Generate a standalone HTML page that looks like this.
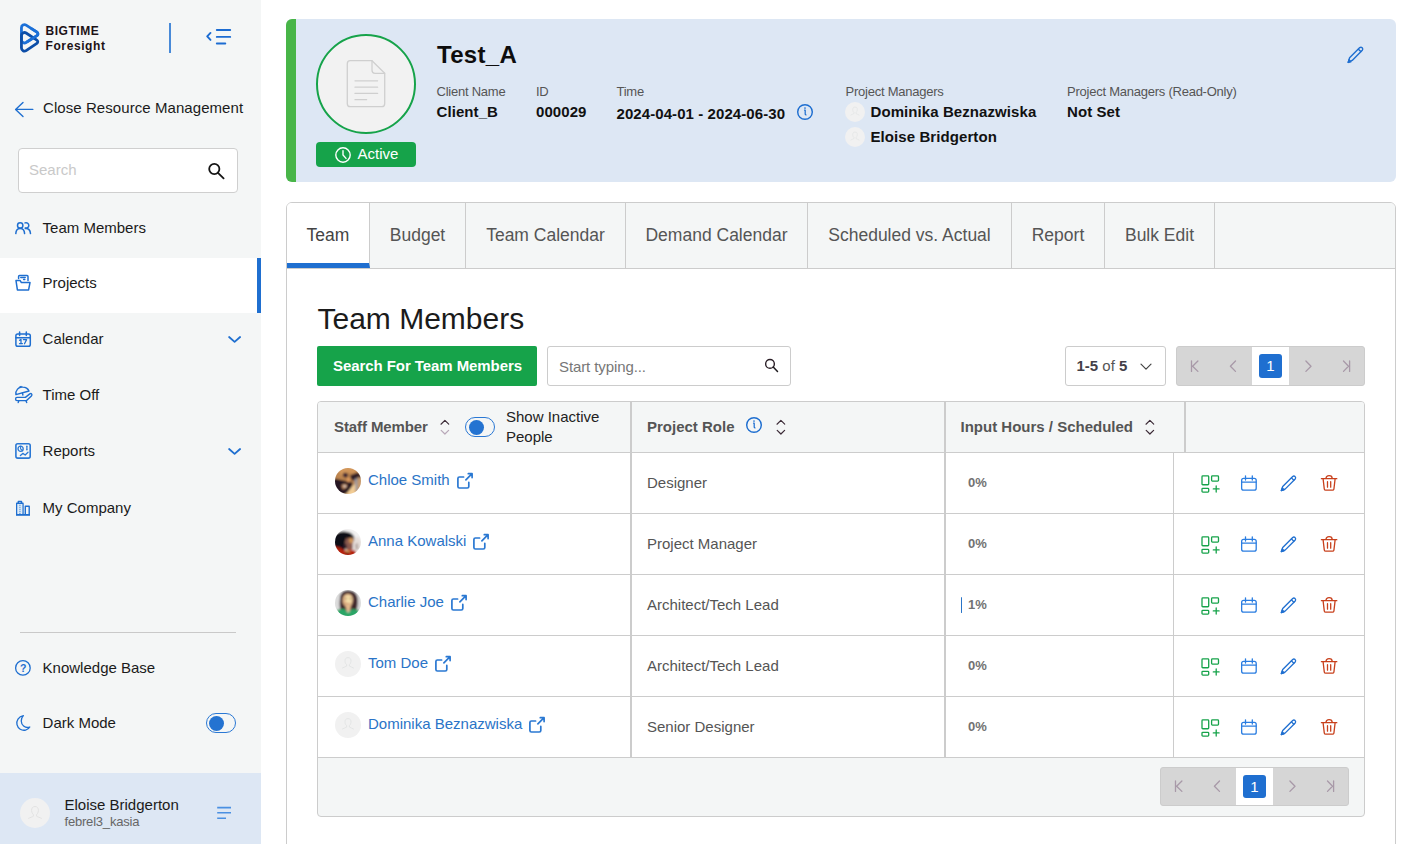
<!DOCTYPE html>
<html lang="en">
<head>
<meta charset="utf-8">
<title>Test_A - Team</title>
<style>
*{box-sizing:border-box;margin:0;padding:0}
html,body{width:1412px;height:844px;overflow:hidden;background:#fff}
body{font-family:"Liberation Sans",sans-serif;color:#1b1b1b;position:relative;font-size:15px}
.abs{position:absolute}
svg{display:block;overflow:visible}
/* sidebar */
#side{position:absolute;left:0;top:0;width:261px;height:844px;background:#f4f6f6}
.mi{position:absolute;left:0;width:261px;height:56px}
.mi .ic{position:absolute;left:15px;top:19px;width:18px;height:18px}
.mi .tx{position:absolute;left:42.600px;top:-.4px;line-height:56px;font-size:15px;color:#1b1b1b;white-space:nowrap}
.mi .chev{position:absolute;left:228px;top:24px}
.mi.act{background:#fff}
.mi.act:after{content:"";position:absolute;right:0;top:0;width:4px;height:100%;background:#1f6fd0}
/* banner */
#ban{position:absolute;left:286px;top:19px;width:1110px;height:163px;background:#dde7f4;border-radius:6px;overflow:hidden}
#ban:before{content:"";position:absolute;left:0;top:0;width:10px;height:100%;background:#48b548}
.lbl{position:absolute;font-size:13px;color:#555;white-space:nowrap;line-height:16px;letter-spacing:-.24px}
.val{position:absolute;font-size:15px;font-weight:bold;color:#111;white-space:nowrap;line-height:18px;letter-spacing:.08px}
.pav{position:absolute;width:20px;height:20px;border-radius:50%;background:#efefef}
.hd{font-size:15px;font-weight:bold;color:#555;line-height:20px;white-space:nowrap}
.ext{position:absolute;left:100%;margin-left:5.800px;top:1px}
/* tabs */
#tabs{position:absolute;left:286px;top:202px;width:1110px;height:700px;border:1px solid #ccc;border-radius:6px 6px 0 0;background:#fff;overflow:hidden}
#tabbar{position:absolute;left:0;top:0;width:100%;height:66px;background:#f4f6f6;border-bottom:1px solid #ccc}
.tab{position:absolute;top:0;height:65px;line-height:65px;font-size:17.5px;color:#555;text-align:center;border-right:1px solid #ccc;white-space:nowrap}
.tab.on{background:#fff;border-bottom:5px solid #1f6fd0;height:65px;color:#444}
/* table */
#tbl{position:absolute;left:317px;top:401px;width:1048px;height:416px;border:1px solid #ccc;border-radius:4px;background:#f4f6f6;overflow:hidden}
.row{position:absolute;left:0;width:1046px;height:61px;background:#fff;border-top:1px solid #ccc}
.row .nm{position:absolute;left:50px;top:18px;font-size:15px;color:#2a74c7;white-space:nowrap;line-height:18px}
.row .role{position:absolute;left:329px;top:21px;font-size:15px;color:#555;white-space:nowrap;line-height:18px}
.row .pct{position:absolute;left:650px;top:21.9px;font-size:13px;font-weight:bold;color:#727272;line-height:16px}
.vl{position:absolute;top:0;width:2px;background:#ccc}
.av{position:absolute;left:17px;top:15px;width:26px;height:26px}
.pager{position:absolute;width:189px;height:39px;background:#d6d6d6;border:1px solid #ccc;border-radius:3px}
.pager .cur{position:absolute;left:75px;top:0;width:37px;height:37px;background:#fff}
.pager .cur i{position:absolute;left:7px;top:7px;width:23px;height:23px;background:#1f6fd0;border-radius:3px;color:#fff;font-style:normal;font-size:15px;line-height:23px;text-align:center}
.p40 .cur{height:38px}
.p40 .cur i{height:24px;line-height:24px}
</style>
</head>
<body>
<div id="side">
 <!-- logo -->
 <svg class="abs" style="left:0;top:0" width="261" height="70" viewBox="0 0 261 70" fill="none">
  <path d="M21.45 27.63A3 3 0 0 1 26.09 25.11L36.99 32.20A2 2 0 0 1 36.97 35.57L26.06 42.48A3 3 0 0 1 21.45 39.95Z" stroke="#1b70d8" stroke-width="2.8"/>
  <path d="M21.45 35.54A3 3 0 0 1 26.09 33.02L36.86 40.05A2 2 0 0 1 36.88 43.38L26.12 50.58A3 3 0 0 1 21.45 48.09Z" stroke="#0c4ea8" stroke-width="2.8"/>
  <path d="M31 28.300L36.990 32.200A2 2 0 0 1 36.970 35.570L27 41.880" stroke="#1b70d8" stroke-width="2.800"/>
  <rect x="169.200" y="23" width="1.600" height="30" fill="#1f6fd0"/>
  <path d="M210.500 32.900L207.200 36.400L210.500 39.900" stroke="#1c6cd2" stroke-width="1.900" stroke-linecap="round" stroke-linejoin="round"/>
  <path d="M216.800 30H230.200M216.800 36.900H230.200M216.800 43.450H225.300" stroke="#1c6cd2" stroke-width="1.900" stroke-linecap="round"/>
 </svg>
 <div class="abs" style="left:45.5px;top:24px;font-size:12px;font-weight:bold;letter-spacing:.55px;line-height:15px;color:#1d1216">BIGTIME</div>
 <div class="abs" style="left:45.5px;top:38.5px;font-size:12px;font-weight:bold;letter-spacing:.6px;line-height:15px;color:#1d1216">Foresight</div>
 <!-- close -->
 <svg class="abs" style="left:0;top:95px" width="40" height="30" viewBox="0 95 40 30" fill="none"><path d="M32.8 109.4H15.6M23 102.4L15.6 109.4L23 116.4" stroke="#1f6fd0" stroke-width="1.4" stroke-linecap="round" stroke-linejoin="round"/></svg>
 <div class="abs" style="left:43px;top:99px;font-size:15px;line-height:18px;white-space:nowrap;color:#1b1b1b;letter-spacing:.07px">Close Resource Management</div>
 <!-- search -->
 <div class="abs" style="left:18px;top:148px;width:220px;height:45px;border:1px solid #cfcfcf;border-radius:4px;background:#fff">
  <div class="abs" style="left:10px;top:12px;font-size:15px;line-height:18px;color:#c9c9c9">Search</div>
  <svg class="abs" style="left:186px;top:11px" width="24" height="24" viewBox="0 0 24 24" fill="none"><circle cx="9.3" cy="9" r="5.1" stroke="#151515" stroke-width="1.8"/><path d="M13 12.8L18.6 18.4" stroke="#151515" stroke-width="1.8" stroke-linecap="round"/></svg>
 </div>
 <!-- menu -->
 <div class="mi" style="top:200px">
  <svg class="ic" viewBox="0 0 18 18" fill="none" stroke="#1f6fd0" stroke-width="1.5" stroke-linecap="round"><circle cx="5.2" cy="6.4" r="2.7"/><path d="M0.8 14.6C1 10.6 3.2 9.4 5.2 9.4S9.4 10.6 9.6 14.6"/><path d="M10 3.9A2.7 2.7 0 1 1 10.2 8.9"/><path d="M10.4 9.6C13.4 9.3 15.3 11 15.5 14.6"/></svg>
  <div class="tx">Team Members</div></div>
 <div class="mi act" style="top:258px;height:55px">
  <svg class="ic" style="top:16px" viewBox="0 0 18 18" fill="none" stroke="#1f6fd0" stroke-width="1.5" stroke-linecap="round" stroke-linejoin="round"><path d="M1 6.6H5.2L6.4 8.6H15L13.6 15.9H2.4Z"/><path d="M3.6 4.4V2.4Q3.6 1.5 4.5 1.5H12.1Q13 1.5 13 2.4V6.6"/><path d="M5.8 3.6H10.2M8.6 5.6H9.8"/></svg>
  <div class="tx" style="line-height:50px">Projects</div></div>
 <div class="mi" style="top:311px">
  <svg class="ic" viewBox="0 0 18 18" fill="none" stroke="#1f6fd0" stroke-width="1.5" stroke-linecap="round"><rect x="0.9" y="3.9" width="14.4" height="12.3" rx="1.8"/><path d="M0.9 7.7H15.3M4.6 1.9V5.4M11.3 1.9V5.4"/><path d="M4.600 10.300L6 9.400V13.500M4.500 13.600H7.400M8.400 9.600H11.600L9.500 13.800" stroke-width="1.250" stroke-linejoin="round"/></svg>
  <div class="tx">Calendar</div>
  <svg class="chev" width="14" height="9" viewBox="0 0 14 9" fill="none"><path d="M1.100 2L6.600 6.900L12.100 2" stroke="#1f6fd0" stroke-width="1.800" stroke-linecap="round" stroke-linejoin="round"/></svg></div>
 <div class="mi" style="top:367px">
  <svg class="ic" viewBox="0 0 18 18" fill="none" stroke="#1f6fd0" stroke-width="1.4" stroke-linecap="round" stroke-linejoin="round"><path d="M0.9 8.6C0.3 4.6 3.6 0.6 7.6 1C10.6 1.2 13 2.8 14 5L0.9 8.6Z"/><path d="M5 1.2L6 0.6M7.4 6.9L7.9 9"/><path d="M2 11.4H10.4L14.8 7.9Q16 7.2 16.7 8.1Q17.3 9 16.4 9.9L11.6 14.6H2Q0.6 14.6 0.6 13T2 11.4Z"/><path d="M3.8 14.8L3.2 16.6M11 14.8L11.7 16.6"/></svg>
  <div class="tx">Time Off</div></div>
 <div class="mi" style="top:423px">
  <svg class="ic" viewBox="0 0 18 18" fill="none" stroke="#2a78d4" stroke-width="1.6" stroke-linecap="round" stroke-linejoin="round"><rect x="0.9" y="1.7" width="14.3" height="14.4" rx="1.8"/><circle cx="5.6" cy="6.8" r="2.6" stroke-width="1.3"/><path d="M5.6 4.4V6.8L7.4 8.6" stroke-width="1.1"/><path d="M11.9 4.4V5.2M11.9 6.8V7.8" stroke-width="1.6"/><path d="M5.4 13.6L7.8 11.4L10.2 13L13 10.3" stroke-width="1.3"/></svg>
  <div class="tx" style="top:.4px">Reports</div>
  <svg class="chev" width="14" height="9" viewBox="0 0 14 9" fill="none"><path d="M1.100 2L6.600 6.900L12.100 2" stroke="#1f6fd0" stroke-width="1.800" stroke-linecap="round" stroke-linejoin="round"/></svg></div>
 <div class="mi" style="top:480px">
  <svg class="ic" viewBox="0 0 18 18" fill="none" stroke="#1f6fd0" stroke-width="1.4" stroke-linejoin="round"><path d="M1.7 15.800V4.300H8V15.800"/><path d="M3.300 4.300V2.400H6.500V4.300"/><path d="M10.300 15.800V7.200H14.200V15.800"/><path d="M1 15.900H15" stroke-width="1.800"/><path d="M4 6.400H5.800M4 8.400H5.800M4 10.400H5.800M4 12.400H5.800M4 14.300H5.800" stroke-width="1.100"/><rect x="2.4" y="5" width="5" height="9.6" fill="#cfe4f7" stroke="none" opacity=".6"/></svg>
  <div class="tx" style="top:.4px">My Company</div></div>
 <div class="abs" style="left:20px;top:632px;width:216px;height:1px;background:#c9c9c9"></div>
 <div class="mi" style="top:640px">
  <svg class="ic" style="left:14px;top:19px" viewBox="0 0 18 18" fill="none"><circle cx="8.9" cy="8.9" r="7.3" stroke="#1f6fd0" stroke-width="1.3"/><text x="5.9" y="12.6" font-family="Liberation Sans" font-size="10.5" font-weight="bold" fill="#1f6fd0">?</text></svg>
  <div class="tx">Knowledge Base</div></div>
 <div class="mi" style="top:695px">
  <svg class="ic" viewBox="0 0 18 18" fill="none"><path d="M8.4 1.6C5.4 4.6 5.6 9.6 8.6 12C10.6 13.6 13 13.8 14.8 13C13 16.2 8.6 17.2 5.2 15.2C1.8 13.2 0.8 8.6 3 5.2C4.2 3.4 6.2 2 8.4 1.6Z" stroke="#1f6fd0" stroke-width="1.3" stroke-linejoin="round"/></svg>
  <div class="tx">Dark Mode</div>
  <div class="abs" style="left:206px;top:18px;width:30px;height:20px;border:1.200px solid #2a78d4;border-radius:10px"><div class="abs" style="left:1.800px;top:1.700px;width:15px;height:15px;border-radius:50%;background:#2473d1"></div></div>
 </div>
 <!-- user -->
 <div class="abs" style="left:0;top:773px;width:261px;height:71px;background:#dde7f4">
  <div class="abs" style="left:20px;top:25px;width:30px;height:30px;border-radius:50%;background:#f1f1f1;overflow:hidden">
   <svg width="30" height="30" viewBox="0 0 30 30" fill="none" stroke="#e2e2e2" stroke-width="1"><path d="M15 8.5c-2.4 0-3.6 1.8-3.4 4.2c.2 2 1 3.200 1.800 3.900v1.600c-1.200.8-3.200 1.300-5.200 2.300M15 8.500c2.400 0 3.600 1.800 3.400 4.200c-.2 2-1 3.200-1.800 3.900v1.600c1.200.8 3.200 1.300 5.200 2.300"/></svg>
  </div>
  <div class="abs" style="left:64.5px;top:23px;font-size:15px;line-height:18px;white-space:nowrap;color:#1b1b1b">Eloise Bridgerton</div>
  <div class="abs" style="left:64.5px;top:41px;font-size:13px;line-height:16px;white-space:nowrap;color:#666;letter-spacing:-.2px">febrel3_kasia</div>
  <svg class="abs" style="left:215px;top:30px" width="20" height="20" viewBox="0 0 20 20" fill="none"><path d="M2.200 4.600H16M2.200 9.800H16M2.200 15.200H11" stroke="#4a90e2" stroke-width="1.6"/></svg>
 </div>
</div>
<div id="ban">
 <div class="abs" style="left:30px;top:15px;width:100px;height:100px;border-radius:50%;border:2px solid #16a34a;background:#f2f2f2"></div>
 <svg class="abs" style="left:60px;top:41px" width="40" height="48" viewBox="346 60 40 48" fill="none" stroke="#cfcfcf" stroke-width="1.300" stroke-linecap="round" stroke-linejoin="round"><path d="M372 60.700H350.300Q347.300 60.700 347.300 63.700V103.700Q347.300 106.700 350.300 106.700H381.700Q384.700 106.700 384.700 103.700V73.300Z"/><path d="M372 60.700V70.300Q372 73.300 375 73.300H384.700"/><path d="M355 80.800H377.600M355 87.200H377.600M355 93.400H377.600M355 99.700H366.600"/></svg>
 <div class="abs" style="left:30px;top:123px;width:100px;height:25px;border-radius:4px;background:#16a34a">
  <svg class="abs" style="left:18px;top:3.500px" width="18" height="18" viewBox="0 0 18 18" fill="none" stroke="#fff" stroke-width="1.4" stroke-linecap="round"><circle cx="9" cy="9" r="7.200"/><path d="M9 4.600V9L12 12.400"/></svg>
  <div class="abs" style="left:41.500px;top:3px;font-size:15px;line-height:18px;color:#fff">Active</div>
 </div>
 <div class="abs" style="left:151px;top:21.500px;font-size:24px;font-weight:bold;line-height:28px;color:#0d0d0d;white-space:nowrap;letter-spacing:.3px">Test_A</div>
 <div class="lbl" style="left:150.500px;top:64.700px">Client Name</div>
 <div class="val" style="left:150.500px;top:83.500px">Client_B</div>
 <div class="lbl" style="left:250px;top:64.700px">ID</div>
 <div class="val" style="left:250px;top:83.500px">000029</div>
 <div class="lbl" style="left:330.500px;top:64.700px">Time</div>
 <div class="val" style="left:330.500px;top:85.500px">2024-04-01 - 2024-06-30</div>
 <svg class="abs" style="left:510px;top:84px" width="18" height="18" viewBox="0 0 18 18" fill="none"><circle cx="9" cy="9" r="7.300" stroke="#1f6fd0" stroke-width="1.450"/><path d="M8.500 7H9.200V11.300L10 11.900" stroke="#1f6fd0" stroke-width="1.250" stroke-linecap="round" stroke-linejoin="round"/><circle cx="9" cy="5" r=".85" fill="#1f6fd0"/></svg>
 <div class="lbl" style="left:559.500px;top:64.700px">Project Managers</div>
 <svg class="abs" style="left:559px;top:83px" width="20" height="20"><use href="#av0"/></svg>
 <div class="val" style="left:584.500px;top:83.500px">Dominika Beznazwiska</div>
 <svg class="abs" style="left:559px;top:108px" width="20" height="20"><use href="#av0"/></svg>
 <div class="val" style="left:584.500px;top:108.500px">Eloise Bridgerton</div>
 <div class="lbl" style="left:781px;top:64.700px">Project Managers (Read-Only)</div>
 <div class="val" style="left:781px;top:83.500px">Not Set</div>
 <svg class="abs" style="left:1060.300px;top:25.700px" width="20" height="20" viewBox="0 0 20 20" fill="none" stroke="#1f6fd0" stroke-width="1.400" stroke-linejoin="round" stroke-linecap="round"><path d="M2.200 17.400L3.600 12.800L13.800 2.600Q15 1.600 16.200 2.800Q17.300 4 16.300 5.200L6.200 15.400Z"/><path d="M12.400 4.200L14.800 6.600"/><path d="M2.200 17.400L4.800 16.800L3 14.800Z" fill="#1f6fd0"/></svg>
</div>
<div id="tabs"><div id="tabbar">
 <div class="tab on" style="left:0;width:83px">Team</div>
 <div class="tab" style="left:83px;width:96px">Budget</div>
 <div class="tab" style="left:179px;width:160px">Team Calendar</div>
 <div class="tab" style="left:339px;width:182px">Demand Calendar</div>
 <div class="tab" style="left:521px;width:204px">Scheduled vs. Actual</div>
 <div class="tab" style="left:725px;width:93px">Report</div>
 <div class="tab" style="left:818px;width:110px">Bulk Edit</div>
</div></div>
<div class="abs" style="left:317.5px;top:298.5px;font-size:30px;line-height:40px;color:#1b1b1b;white-space:nowrap">Team Members</div>
<div class="abs" style="left:317px;top:346px;width:220px;height:40px;background:#16a34a;border-radius:2px;color:#fff;font-weight:bold;font-size:15px;line-height:40px;text-align:center;white-space:nowrap;letter-spacing:-.07px;text-indent:1px">Search For Team Members</div>
<div class="abs" style="left:547px;top:346px;width:244px;height:40px;border:1px solid #ccc;border-radius:3px;background:#fff">
 <div class="abs" style="left:11px;top:10.500px;font-size:15px;line-height:18px;color:#777;letter-spacing:-.1px">Start typing...</div>
 <svg class="abs" style="left:216px;top:11px" width="16" height="16" viewBox="0 0 16 16" fill="none"><circle cx="6" cy="5.900" r="4.350" stroke="#2a1e26" stroke-width="1.400"/><path d="M9.200 9.100L13.500 13.500" stroke="#1d1a1e" stroke-width="1.500" stroke-linecap="round"/></svg>
</div>
<div class="abs" style="left:1065px;top:346px;width:101px;height:40px;border:1px solid #ccc;border-radius:3px;background:#fff">
 <div class="abs" style="left:10.500px;top:10px;font-size:15px;line-height:18px;color:#555;white-space:nowrap"><b style="color:#433f48">1-5</b> of <b style="color:#433f48">5</b></div>
 <svg class="abs" style="left:74px;top:16px" width="12" height="8" viewBox="0 0 12 8" fill="none"><path d="M1 1.200L6 6.200L11 1.200" stroke="#444" stroke-width="1.200" stroke-linecap="round" stroke-linejoin="round"/></svg>
</div>
<div class="pager p40" style="left:1176px;top:346px;height:40px"><svg class="abs" style="left:0;top:.8px" width="187" height="37" viewBox="0 0 187 37" fill="none" stroke="#a899a8" stroke-width="1.3" stroke-linecap="round" stroke-linejoin="round"><path d="M14.500 13V23.400M20.900 13L15.600 18.200L20.900 23.400"/><path d="M58.500 13L53.400 18.200L58.500 23.400"/><path d="M128.900 13L134 18.200L128.900 23.400"/><path d="M172.600 13V23.400M166.500 13L171.500 18.200L166.500 23.400"/></svg><div class="cur"><i>1</i></div></div>

<svg width="0" height="0" style="position:absolute"><defs><symbol id="av0" viewBox="0 0 26 26"><circle cx="13" cy="13" r="13" fill="#f1f1f1"/><path d="M13 6.600c-2.100 0-3.200 1.500-3 3.600c.1 1.700.9 2.800 1.600 3.400v1.500c-1 .7-2.700 1.100-4.400 2M13 6.600c2.100 0 3.200 1.500 3 3.600c-.1 1.700-.9 2.800-1.600 3.400v1.500c1 .7 2.700 1.100 4.400 2" fill="none" stroke="#e1e3e3" stroke-width=".9"/></symbol>
<filter id="bl" x="-20%" y="-20%" width="140%" height="140%"><feGaussianBlur stdDeviation=".9"/></filter>
<clipPath id="cc"><circle cx="13" cy="13" r="13"/></clipPath>
<symbol id="av1" viewBox="0 0 26 26"><g clip-path="url(#cc)"><g filter="url(#bl)"><rect x="-3" y="-3" width="32" height="32" fill="#bd8550"/><path d="M3 -1H22L20 6L12 4L6 8Z" fill="#d2965a"/><path d="M-2 10L4 11.500L11 13L17 14L18 19L14 24L8 27L-2 23Z" fill="#271820"/><ellipse cx="10.400" cy="7.200" rx="2.700" ry="2.300" fill="#382330" transform="rotate(25 10.400 7.200)"/><path d="M15 7.500L19 5.800L23 4.500L27 8V13.500L21 13L16.500 12Z" fill="#2e1c27"/><path d="M12.300 9L15 10.500L14.600 14.500L11.800 13.500Z" fill="#e29c5e"/><path d="M6.200 17.500Q8.500 14.800 12.600 16.800Q12 20.500 7.800 21.600Z" fill="#b57f55"/><path d="M8.600 16.800L11.200 18.200L10.600 19.400L8.400 18.200Z" fill="#efe6e0"/><path d="M19.500 11L22.500 10L23 23L20 22.500Z" fill="#9d9ca3"/><path d="M22.500 9L27 10V24L22.800 23Z" fill="#c79a6c"/><path d="M17.800 17.200L20.200 16L20.500 27H10.500Z" fill="#f2cc94"/></g></g></symbol>
<symbol id="av2" viewBox="0 0 26 26"><g clip-path="url(#cc)"><g filter="url(#bl)"><rect x="-3" y="-3" width="32" height="32" fill="#f2f1f1"/><path d="M-2 8Q1 2.500 9 2.500Q17 2.500 19.500 8.500L19 12L13 10L10.500 15L10 21L4 23L-2 21Z" fill="#0f1116"/><path d="M10.800 9.500L17.500 8.500L18.500 12L17.600 16L18 20L13 21.500L10 19.500L9.800 14Z" fill="#8a5a50"/><path d="M14 9.500L18 9L18.400 12.500L16.500 14.500L14.200 13.500Z" fill="#d09658"/><path d="M9 14L11.200 15L12 18.500L10.500 20L8.500 18Z" fill="#33202a"/><path d="M18.500 8.500L24 8L27 14L25 21L19.500 21L18.200 16L19 12Z" fill="#e6deda"/><path d="M20 15L23 14L23.500 20L20.500 21.500Z" fill="#b9aca8"/><path d="M-2 17L5 18.500L10 21.500L16 20.500L20 21.500L23 28H-2Z" fill="#b4230b"/><path d="M9.500 22Q13 19.600 15.500 22.500Q13 24.500 9.500 22Z" fill="#dc9c58"/><path d="M10 23.500Q12.500 22.500 14.500 23.800L12 25.500Z" fill="#5a1a10"/></g></g></symbol>
<symbol id="av3" viewBox="0 0 26 26"><g clip-path="url(#cc)"><g filter="url(#bl)"><rect x="-3" y="-3" width="32" height="32" fill="#dcdcdc"/><path d="M13.500 .5C8.500 0 5 3.500 5 8.500C4.500 12.500 4.500 17 5.500 20.500H21.500C22.500 17 23 12 22.500 8C22 3.500 18.500 .5 13.500 .5Z" fill="#40262b"/><path d="M8 7.500Q9.500 3.600 13.500 3.800Q17.800 4.600 18 9.500Q18 14 15.800 16.300L15.500 19L13.200 22.500L11 19L10.800 16.800Q7.600 14.500 7.600 10.500Z" fill="#e4b98c"/><path d="M10.500 6L15.500 5.500L17 9L15.500 14L12.200 15L10.500 11Z" fill="#f6dfa8"/><path d="M9 11L10.500 13.500L10.300 15.500Z" fill="#bb7c50"/><path d="M9.800 8.800L12 8.500M14.300 8.500L16.500 8.800" stroke="#6f4a3c" stroke-width=".8"/><path d="M11 13.300Q13 14.600 15 13.300" stroke="#b5604a" stroke-width=".8" fill="none"/><path d="M1 20.500Q6 18.300 9.500 18.800L13.200 23L16.800 19Q20.500 18.500 25 20.800V28H1Z" fill="#29a566"/></g></g></symbol>
<g id="acts" fill="none" stroke-width="1.3" stroke-linecap="round" stroke-linejoin="round">
<g stroke="#16a34a"><rect x="2" y="2.85" width="6.7" height="8.9" rx=".8"/><rect x="11.6" y="2.85" width="6.9" height="5.2" rx=".8"/><rect x="2" y="15.3" width="6.7" height="3.8" rx=".8"/><path d="M16.200 12.900V19M13.300 15.900H19.100"/></g>
<g stroke="#2a7de1"><rect x="41.650" y="5.300" width="14.550" height="11.900" rx="2"/><path d="M41.700 9.100H56.200M45.500 2.800V7M52.300 2.800V7"/></g>
<g stroke="#1f6fd0"><path d="M81.300 17.600L82.700 13.500L92.700 3.500Q93.900 2.500 95.100 3.600Q96.200 4.800 95.200 6L85.100 16.100Z"/><path d="M91.500 4.900L93.800 7.300"/><path d="M81.300 17.600L84.100 16.800L82.300 14.900Z" fill="#1f6fd0"/></g>
<g stroke="#c8401c"><path d="M121.400 5.700H136.800M126 5.500Q126 2.700 129.100 2.700Q132.200 2.700 132.200 5.500M123.100 5.900L124.300 16.100Q124.500 17.200 125.700 17.200H132.500Q133.700 17.200 133.900 16.100L135.100 5.900M127.500 8.700V14.200M130.700 8.700V14.200"/></g>
</g></defs></svg>
<div id="tbl">
<div class="abs" style="left:0;top:0;width:1046px;height:50px;background:#f4f6f6"></div>
<div class="abs hd" style="left:16px;top:15px;letter-spacing:-.1px">Staff Member</div>
<svg class="abs" style="left:120.6px;top:17px" width="12" height="18" viewBox="0 0 12 18" fill="none" stroke-width="1.2" stroke-linecap="round" stroke-linejoin="round"><path d="M2 5.200L5.900 1.400L9.700 5.200" stroke="#3d2c38"/><path d="M2.200 11.300L5.900 15L9.600 11.300" stroke="#b9a9b9"/></svg>
<div class="abs" style="left:147px;top:15px;width:30px;height:20px;border:1.200px solid #2a78d4;border-radius:10px"><div class="abs" style="left:2.800px;top:1.700px;width:15px;height:15px;border-radius:50%;background:#2473d1"></div></div>
<div class="abs" style="left:188px;top:5px;font-size:15px;line-height:20px;color:#222;white-space:nowrap">Show Inactive<br>People</div>
<div class="abs hd" style="left:329px;top:15px">Project Role</div>
<svg class="abs" style="left:427px;top:14px" width="18" height="18" viewBox="0 0 18 18" fill="none"><circle cx="9" cy="9" r="7.300" stroke="#1f6fd0" stroke-width="1.450"/><path d="M8.500 7H9.200V11.300L10 11.900" stroke="#1f6fd0" stroke-width="1.250" stroke-linecap="round" stroke-linejoin="round"/><circle cx="9" cy="5" r=".85" fill="#1f6fd0"/></svg>
<svg class="abs" style="left:456.7px;top:17px" width="12" height="18" viewBox="0 0 12 18" fill="none" stroke-width="1.2" stroke-linecap="round" stroke-linejoin="round"><path d="M2 5.200L5.900 1.400L9.700 5.200" stroke="#3d2c38"/><path d="M2.200 11.300L5.900 15L9.600 11.300" stroke="#3d2c38"/></svg>
<div class="abs hd" style="left:642.500px;top:15px">Input Hours / Scheduled</div>
<svg class="abs" style="left:825.7px;top:17px" width="12" height="18" viewBox="0 0 12 18" fill="none" stroke-width="1.2" stroke-linecap="round" stroke-linejoin="round"><path d="M2 5.200L5.900 1.400L9.700 5.200" stroke="#3d2c38"/><path d="M2.200 11.300L5.900 15L9.600 11.300" stroke="#3d2c38"/></svg>

<div class="row" style="top:50px"><svg class="av" width="26" height="26"><use href="#av1"/></svg><div class="nm">Chloe Smith<svg class="ext" width="18" height="18" viewBox="455 472 18 18" fill="none" stroke="#2a78d2" stroke-width="1.700" stroke-linecap="round" stroke-linejoin="round"><path d="M462.600 477H458.400Q456.900 477 456.900 478.500V486.500Q456.900 488 458.400 488H466.300Q467.800 488 467.800 486.500V482.400"/><path d="M464.900 479.800L470.800 473.900M467.300 473.700H471.100V477.600"/></svg></div><div class="role">Designer</div><div class="pct">0%</div><svg class="abs" style="left:882px;top:20px" width="140" height="20" viewBox="0 0 140 20"><use href="#acts"/></svg></div>
<div class="row" style="top:111px"><svg class="av" width="26" height="26"><use href="#av2"/></svg><div class="nm">Anna Kowalski<svg class="ext" width="18" height="18" viewBox="455 472 18 18" fill="none" stroke="#2a78d2" stroke-width="1.700" stroke-linecap="round" stroke-linejoin="round"><path d="M462.600 477H458.400Q456.900 477 456.900 478.500V486.500Q456.900 488 458.400 488H466.300Q467.800 488 467.800 486.500V482.400"/><path d="M464.900 479.800L470.800 473.900M467.300 473.700H471.100V477.600"/></svg></div><div class="role">Project Manager</div><div class="pct">0%</div><svg class="abs" style="left:882px;top:20px" width="140" height="20" viewBox="0 0 140 20"><use href="#acts"/></svg></div>
<div class="row" style="top:172px"><svg class="av" width="26" height="26"><use href="#av3"/></svg><div class="nm">Charlie Joe<svg class="ext" width="18" height="18" viewBox="455 472 18 18" fill="none" stroke="#2a78d2" stroke-width="1.700" stroke-linecap="round" stroke-linejoin="round"><path d="M462.600 477H458.400Q456.900 477 456.900 478.500V486.500Q456.900 488 458.400 488H466.300Q467.800 488 467.800 486.500V482.400"/><path d="M464.900 479.800L470.800 473.900M467.300 473.700H471.100V477.600"/></svg></div><div class="role">Architect/Tech Lead</div><div class="abs" style="left:642.900px;top:22px;width:1.300px;height:16px;border-radius:1px;background:#2a74c7"></div><div class="pct">1%</div><svg class="abs" style="left:882px;top:20px" width="140" height="20" viewBox="0 0 140 20"><use href="#acts"/></svg></div>
<div class="row" style="top:233px"><svg class="av" width="26" height="26"><use href="#av0"/></svg><div class="nm">Tom Doe<svg class="ext" width="18" height="18" viewBox="455 472 18 18" fill="none" stroke="#2a78d2" stroke-width="1.700" stroke-linecap="round" stroke-linejoin="round"><path d="M462.600 477H458.400Q456.900 477 456.900 478.500V486.500Q456.900 488 458.400 488H466.300Q467.800 488 467.800 486.500V482.400"/><path d="M464.900 479.800L470.800 473.900M467.300 473.700H471.100V477.600"/></svg></div><div class="role">Architect/Tech Lead</div><div class="pct">0%</div><svg class="abs" style="left:882px;top:20px" width="140" height="20" viewBox="0 0 140 20"><use href="#acts"/></svg></div>
<div class="row" style="top:294px"><svg class="av" width="26" height="26"><use href="#av0"/></svg><div class="nm">Dominika Beznazwiska<svg class="ext" width="18" height="18" viewBox="455 472 18 18" fill="none" stroke="#2a78d2" stroke-width="1.700" stroke-linecap="round" stroke-linejoin="round"><path d="M462.600 477H458.400Q456.900 477 456.900 478.500V486.500Q456.900 488 458.400 488H466.300Q467.800 488 467.800 486.500V482.400"/><path d="M464.900 479.800L470.800 473.900M467.300 473.700H471.100V477.600"/></svg></div><div class="role">Senior Designer</div><div class="pct">0%</div><svg class="abs" style="left:882px;top:20px" width="140" height="20" viewBox="0 0 140 20"><use href="#acts"/></svg></div>
<div class="vl" style="left:312px;height:356px"></div>
<div class="vl" style="left:626px;height:356px"></div>
<div class="vl" style="left:866px;height:51px"></div>
<div class="vl" style="left:855px;top:51px;width:1px;height:305px"></div>
<div class="abs" style="left:0;top:355px;width:1046px;height:1px;background:#ccc"></div>
<div class="pager" style="left:842px;top:365px"><svg class="abs" style="left:0;top:0" width="187" height="37" viewBox="0 0 187 37" fill="none" stroke="#a899a8" stroke-width="1.3" stroke-linecap="round" stroke-linejoin="round"><path d="M14.500 13V23.400M20.900 13L15.600 18.200L20.900 23.400"/><path d="M58.500 13L53.400 18.200L58.500 23.400"/><path d="M128.900 13L134 18.200L128.900 23.400"/><path d="M172.600 13V23.400M166.500 13L171.500 18.200L166.500 23.400"/></svg><div class="cur"><i>1</i></div></div>
</div>
</body>
</html>
